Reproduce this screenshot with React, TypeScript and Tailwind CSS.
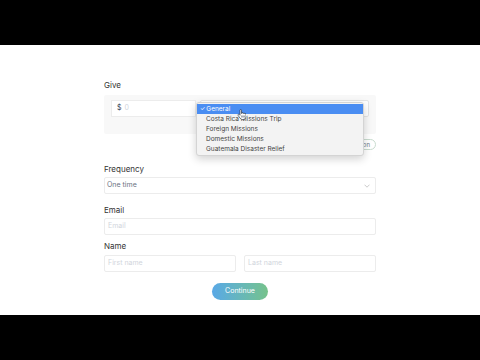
import React from "react";

const funds = [
  "General",
  "Costa Rica Missions Trip",
  "Foreign Missions",
  "Domestic Missions",
  "Guatemala Disaster Relief",
];

function Label({ children }: { children: React.ReactNode }) {
  return <div className="text-[8px] leading-[10px] font-normal text-[#333]">{children}</div>;
}

function HandCursor() {
  return (
    <svg width="9" height="11" viewBox="0 0 18 22" className="absolute left-[40px] top-[6px]">
      <path
        d="M6 2.5c0-1 .8-1.5 1.5-1.5S9 1.5 9 2.5V9l.5-.2c0-1 .8-1.5 1.5-1.5s1.5.6 1.5 1.5v.4c.2-.8.9-1.2 1.5-1.2.8 0 1.5.6 1.5 1.5v.5c.3-.5.8-.8 1.3-.8.8 0 1.2.7 1.2 1.5V15c0 3.5-2.5 6-6 6H11c-2.2 0-3.6-1-4.8-2.6L2.3 13c-.6-.8-.4-1.8.3-2.3.8-.5 1.6-.3 2.2.4L6 12.5z"
        fill="#fff"
        stroke="#1f2937"
        strokeWidth="1.3"
        strokeLinejoin="round"
      />
      <path d="M9.5 13v4M12 13v4M14.5 13v4" stroke="#1f2937" strokeWidth="1.1" />
    </svg>
  );
}

export default function App() {
  return (
    <div className="flex h-[360px] w-[480px] flex-col bg-black font-['Inter',sans-serif]">
      <div className="h-[45px] shrink-0" />
      <div className="h-[270px] shrink-0 bg-white pt-[35px]">
        <div className="relative mx-auto w-[272px]">
          <Label>Give</Label>
          <div className="mt-[5px] h-[39px] rounded-[2px] bg-[#f8f8f8] px-[7px] pt-[5px]">
            <div className="flex gap-[4px]">
              <div className="flex h-[17px] w-[85px] items-center gap-[3px] border border-[#ececec] bg-white px-[5px] text-[7px]">
                <span className="text-gray-700">$</span>
                <span className="text-gray-300">0</span>
              </div>
              <div className="h-[17px] flex-1 rounded-[2px] border border-[#e5e5e5] bg-white" />
            </div>
          </div>
          <div className="mt-[5px] flex justify-end">
            <div className="flex h-[11px] items-center rounded-full border border-[#c9dccf] px-[5px] text-[6px] text-gray-500">
              Add designation
            </div>
          </div>

          <div className="mt-[14px]">
            <Label>Frequency</Label>
          </div>
          <div className="mt-[3px] flex h-[17px] items-center justify-between rounded-[2px] border border-[#ececec] pl-[2px] pr-[5px] text-[7px] text-gray-500">
            <span>One time</span>
            <svg width="6" height="4" viewBox="0 0 6 4">
              <path d="M.5.7 3 3.2 5.5.7" fill="none" stroke="#b5b5b5" strokeWidth="0.7" />
            </svg>
          </div>

          <div className="mt-[11px]">
            <Label>Email</Label>
          </div>
          <div className="mt-[3px] flex h-[17px] items-center rounded-[2px] border border-[#ececec] px-[3px] text-[7px] text-gray-300">
            Email
          </div>

          <div className="mt-[6px]">
            <Label>Name</Label>
          </div>
          <div className="mt-[4px] flex gap-[8px]">
            <div className="flex h-[17px] flex-1 items-center rounded-[2px] border border-[#ececec] px-[3px] text-[7px] text-gray-300">
              First name
            </div>
            <div className="flex h-[17px] flex-1 items-center rounded-[2px] border border-[#ececec] px-[3px] text-[7px] text-gray-300">
              Last name
            </div>
          </div>

          <div className="mt-[11px] flex justify-center">
            <button
              type="button"
              className="h-[17px] w-[56px] rounded-full bg-gradient-to-r from-[#5aa8e6] to-[#76c28a] text-[7px] font-normal text-white"
            >
              Continue
            </button>
          </div>

          <div className="absolute left-[92px] top-[22px] w-[168px] rounded-[3px] border border-[#d4d4d4] bg-[#f3f3f3] py-[1px] shadow-[0_3px_8px_rgba(0,0,0,0.18)]">
            {funds.map((f, i) => (
              <div
                key={f}
                className={
                  i === 0
                    ? "flex h-[10px] items-center bg-[#4a8df2] pl-[3px] text-[6.5px] leading-none text-white"
                    : "flex h-[10px] items-center pl-[9px] text-[6.5px] leading-none text-[#444]"
                }
              >
                {i === 0 && <span className="mr-[1px] text-[6px]">✓</span>}
                {f}
              </div>
            ))}
            <HandCursor />
          </div>
        </div>
      </div>
      <div className="h-[45px] shrink-0" />
    </div>
  );
}
